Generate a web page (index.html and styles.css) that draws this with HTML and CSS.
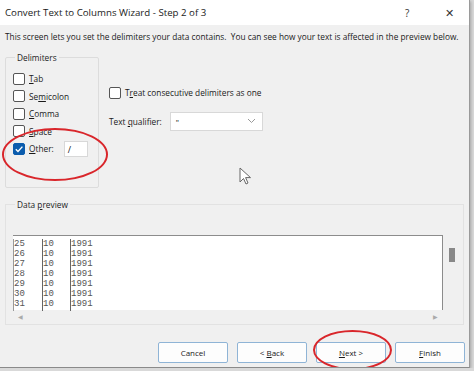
FILE: index.html
```html
<!DOCTYPE html>
<html lang="en">
<head>
    <meta charset="UTF-8">
    <title>Convert Text to Columns Wizard - Step 2 of 3</title>
    <link rel="stylesheet" href="styles.css">
</head>
<body>
    <div class="dialog">
        <div class="titlebar">
            <span class="title">Convert Text to Columns Wizard - Step 2 of 3</span>
            <span class="help">?</span>
            <span class="close">&#x2715;</span>
        </div>

        <div class="desc">This screen lets you set the delimiters your data contains.&nbsp; You can see how your text is affected in the preview below.</div>

        <div class="options">
            <fieldset class="delims">
                <legend>Delimiters</legend>
                <div class="check"><span class="box"></span><span><u>T</u>ab</span></div>
                <div class="check"><span class="box"></span><span>Se<u>m</u>icolon</span></div>
                <div class="check"><span class="box"></span><span><u>C</u>omma</span></div>
                <div class="check"><span class="box"></span><span><u>S</u>pace</span></div>
                <div class="check">
                    <span class="box checked">
                        <svg width="12" height="12" viewBox="0 0 12 12"><path d="M2.8 6.2 L5 8.4 L9.4 3.6" fill="none" stroke="#fff" stroke-width="1.4"/></svg>
                    </span>
                    <span><u>O</u>ther:</span>
                    <span class="other-input">/</span>
                </div>
            </fieldset>

            <div class="side">
                <div class="check"><span class="box"></span><span>T<u>r</u>eat consecutive delimiters as one</span></div>
                <div class="qualifier">
                    <span>Text <u>q</u>ualifier:</span>
                    <div class="select">
                        <span>"</span>
                        <svg width="9" height="6" viewBox="0 0 9 6"><path d="M1 1 L4.5 4.5 L8 1" fill="none" stroke="#999" stroke-width="1"/></svg>
                    </div>
                </div>
            </div>
        </div>

        <fieldset class="preview">
            <legend>Data <u>p</u>review</legend>
            <div class="grid-wrap">
                <div class="grid">
                    <div class="col c1"><div>25</div><div>26</div><div>27</div><div>28</div><div>29</div><div>30</div><div>31</div></div>
                    <div class="col c2"><div>10</div><div>10</div><div>10</div><div>10</div><div>10</div><div>10</div><div>10</div></div>
                    <div class="col c3"><div>1991</div><div>1991</div><div>1991</div><div>1991</div><div>1991</div><div>1991</div><div>1991</div></div>
                </div>
                <div class="vscroll"><span class="thumb"></span></div>
            </div>
            <div class="hscroll">
                <span class="arrow">&#9664;</span>
                <span class="arrow">&#9654;</span>
            </div>
        </fieldset>

        <div class="buttons">
            <button>Cancel</button>
            <button>&lt; <u>B</u>ack</button>
            <button><u>N</u>ext &gt;</button>
            <button><u>F</u>inish</button>
        </div>

        <!-- red marker rings drawn over the screenshot -->
        <span class="ring ring-other"></span>
        <span class="ring ring-next"></span>

        <svg class="cursor" width="14" height="20" viewBox="0 0 14 20">
            <path d="M1 1 L1 15 L4.5 11.5 L7 17 L9 16 L6.6 10.6 L11.5 10.6 Z" fill="#fff" stroke="#666" stroke-width="1"/>
        </svg>
    </div>
</body>
</html>
```

FILE: styles.css
```css
body {
    margin: 0;
    background: #d9d9d9;
    font-family: "Open Sans", "Noto Sans", sans-serif;
    color: #1a1a1a;
}
u {
    text-decoration: underline;
    text-underline-offset: 1px;
}
.dialog {
    position: relative;
    width: 469px;
    height: 367px;
    background: #f0f0f0;
    border-right: 1px solid #9a9a9a;
    border-bottom: 1px solid #8a8a8a;
    box-shadow: 1px 1px 3px rgba(0,0,0,0.25);
    overflow: hidden;
}
.titlebar {
    height: 25px;
    background: #fff;
    display: flex;
    align-items: center;
    padding-left: 5px;
    font-size: 9.7px;
}
.title {
    flex: 1;
}
.help {
    width: 40px;
    font-size: 10px;
    color: #333;
}
.close {
    width: 24px;
    font-size: 11px;
    color: #333;
}
.desc {
    font-size: 8.3px;
    padding: 6px 0 0 5px;
    height: 14px;
}
.options {
    display: flex;
    padding-left: 5px;
    margin-top: 7px;
}
.delims {
    width: 85px;
    height: 127px;
    margin: 0;
    padding: 7px 0 0 7px;
    border: 1px solid #dcdcdc;
    border-radius: 2px;
}
legend, .preview legend {
    font-size: 8.3px;
    padding: 0 2px;
    margin-left: 2px;
    color: #222;
}
.check {
    display: flex;
    align-items: center;
    height: 17.5px;
    font-size: 8.3px;
    gap: 4px;
}
.box {
    width: 10px;
    height: 10px;
    border: 1px solid #555;
    border-radius: 2px;
    background: #fff;
    display: inline-flex;
}
.box.checked {
    background: #0b5cad;
    border-color: #0b5cad;
}
.box svg {
    margin: -1px;
}
.other-input {
    width: 24px;
    height: 16px;
    margin-left: 6px;
    background: #fff;
    border: 1px solid #d8d8d8;
    font-size: 9px;
    padding-left: 3px;
    box-sizing: border-box;
    line-height: 16px;
}
.side {
    padding: 32px 0 0 10px;
}
.qualifier {
    display: flex;
    align-items: center;
    gap: 8px;
    margin-top: 10px;
    font-size: 8.3px;
}
.select {
    width: 93px;
    height: 19px;
    box-sizing: border-box;
    background: #fff;
    border: 1px solid #d8d8d8;
    display: flex;
    align-items: center;
    justify-content: space-between;
    padding: 0 6px 0 5px;
    font-size: 8px;
}
.preview {
    margin: 11px 0 0 5px;
    width: 443px;
    height: 124px;
    padding: 0 0 0 7px;
    border: 1px solid #e2e2e2;
}
.grid-wrap {
    display: flex;
    margin-top: 25px;
}
.grid {
    width: 430px;
    height: 75px;
    background: #fff;
    border-top: 1px solid #8c8c8c;
    border-right: 1px solid #8c8c8c;
    box-sizing: border-box;
    display: flex;
    font-family: "Liberation Mono", monospace;
    font-size: 9px;
    line-height: 10px;
    color: #555;
    padding-top: 3px;
}
.col {
    height: 72px;
    border-left: 1px solid #666;
}
.col.c1 {
    width: 28px;
    border-left: 1px solid #999;
}
.col.c2 {
    width: 27px;
}
.vscroll {
    width: 14px;
    padding: 13px 0 0 6px;
}
.thumb {
    display: block;
    width: 6px;
    height: 14px;
    background: #888;
}
.hscroll {
    width: 430px;
    height: 14px;
    display: flex;
    justify-content: space-between;
    align-items: center;
    padding: 0 5px;
    box-sizing: border-box;
    font-size: 6px;
    color: #aaa;
}
.buttons {
    display: flex;
    justify-content: flex-end;
    gap: 9px;
    padding: 17px 4px 0 0;
}
button {
    width: 70px;
    height: 21px;
    background: #fdfdfd;
    border: 1px solid #8fb4d6;
    border-radius: 2px;
    font-family: "Open Sans", "Noto Sans", sans-serif;
    font-size: 8px;
    color: #1a1a1a;
    padding: 0;
}
.ring {
    position: absolute;
    border: 2px solid #d9262b;
    border-radius: 50%;
    box-sizing: border-box;
}
.ring-other {
    left: 2px;
    top: 128px;
    width: 106px;
    height: 53px;
}
.ring-next {
    left: 313px;
    top: 330px;
    width: 79px;
    height: 40px;
}
.cursor {
    position: absolute;
    left: 239px;
    top: 167px;
}
```
